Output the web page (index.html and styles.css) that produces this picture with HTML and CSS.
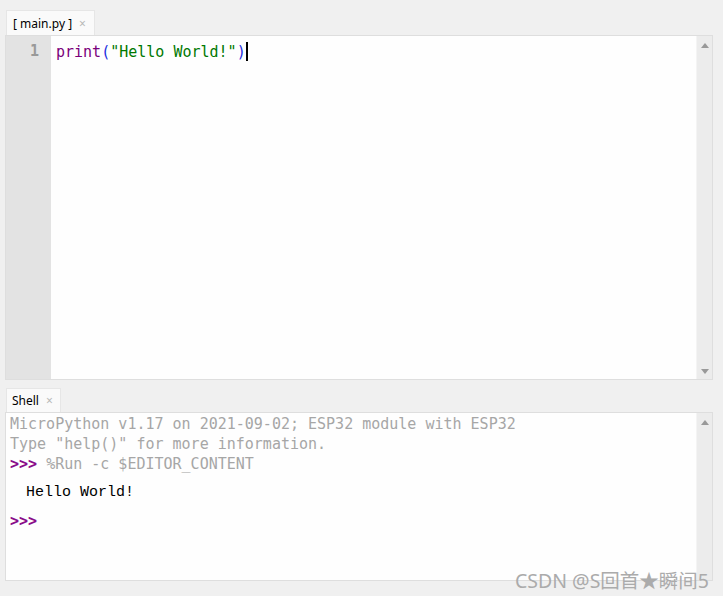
FILE: index.html
```html
<!DOCTYPE html>
<html lang="en">
<head>
    <meta charset="UTF-8">
    <title>Thonny - main.py</title>
    <link rel="stylesheet" href="styles.css">
</head>
<body>
    <div class="ide">
        <div class="tabs">
            <div class="tab">[ main.py ]<span class="close">×</span></div>
        </div>
        <div class="editor">
            <div class="gutter"><span class="lineno">1</span></div>
            <div class="code"><span class="kw">print</span><span class="paren">(</span><span class="str">"Hello World!"</span><span class="paren">)</span><span class="caret"></span></div>
            <div class="scrollbar">
                <span class="arrow up"></span>
                <span class="arrow down"></span>
            </div>
        </div>

        <div class="tabs shell-tabs">
            <div class="tab shell-tab">Shell<span class="close">×</span></div>
        </div>
        <div class="shell">
            <div class="shell-text">
                <div class="line muted">MicroPython v1.17 on 2021-09-02; ESP32 module with ESP32</div>
                <div class="line muted">Type "help()" for more information.</div>
                <div class="line"><span class="prompt">&gt;&gt;&gt;</span> <span class="muted">%Run -c $EDITOR_CONTENT</span></div>
                <div class="output">Hello World!</div>
                <div class="line"><span class="prompt">&gt;&gt;&gt;</span></div>
            </div>
            <div class="scrollbar">
                <span class="arrow up"></span>
            </div>
            <div class="watermark">CSDN @S回首★瞬间5</div>
        </div>
    </div>
</body>
</html>
```

FILE: styles.css
```css
body {
    margin: 0;
    background: #f0f0f0;
    font-family: "Noto Sans", "Open Sans", sans-serif;
}
.ide {
    padding: 10px 10px 0 5px;
    display: flex;
    flex-direction: column;
    height: 586px;
}
.tabs {
    display: flex;
    padding-left: 1px;
}
.tab {
    height: 24px;
    padding: 0 8px 0 6px;
    display: flex;
    align-items: center;
    font-size: 12px;
    color: #000;
    background: #fafafa;
    border: 1px solid #e6e6e6;
    border-bottom: none;
}
.close {
    color: #b8b8b8;
    font-size: 12px;
    margin-left: 7px;
}
.editor {
    display: flex;
    height: 343px;
    border: 1px solid #dedede;
    background: #fefefe;
}
.gutter {
    width: 45px;
    background: #e3e3e3;
    font-family: "DejaVu Sans Mono", monospace;
    font-size: 15px;
    color: #999;
    font-weight: bold;
    text-align: right;
    padding-top: 6px;
}
.lineno {
    padding-right: 12px;
}
.code {
    flex: 1;
    padding: 6px 0 0 5px;
    font-family: "DejaVu Sans Mono", monospace;
    font-size: 15px;
    line-height: 20px;
}
.kw { color: #7a007a; }
.paren { color: #1f2fe0; }
.str { color: #007800; }
.caret {
    display: inline-block;
    width: 2px;
    height: 19px;
    background: #000;
    vertical-align: -4px;
}
.scrollbar {
    width: 16px;
    background: #ececec;
    border-left: 1px solid #f4f4f4;
    display: flex;
    flex-direction: column;
    justify-content: space-between;
    align-items: center;
    padding: 7px 0 5px;
    box-sizing: border-box;
}
.arrow {
    width: 0;
    height: 0;
    border-left: 4px solid transparent;
    border-right: 4px solid transparent;
}
.arrow.up { border-bottom: 5px solid #999; }
.arrow.down { border-top: 5px solid #999; }
.shell-tabs {
    margin-top: 8px;
}
.shell-tab {
    height: 23px;
    padding: 0 7px 0 5px;
}
.shell {
    display: flex;
    position: relative;
    height: 167px;
    border: 1px solid #dedede;
    background: #fefefe;
}
.shell-text {
    flex: 1;
    padding: 1px 0 0 4px;
    font-family: "DejaVu Sans Mono", monospace;
    font-size: 15px;
    line-height: 20px;
}
.muted { color: #a6a6a6; }
.prompt {
    color: #8a0c8a;
    font-weight: bold;
}
.output {
    font-family: "Liberation Mono", monospace;
    font-size: 15px;
    line-height: 20px;
    color: #000;
    padding: 9px 0 8px 16px;
}
.watermark {
    position: absolute;
    right: 3px;
    bottom: -14px;
    font-family: "Noto Sans", "Noto Sans CJK SC", sans-serif;
    font-size: 19.5px;
    color: #ababab;
}
```
